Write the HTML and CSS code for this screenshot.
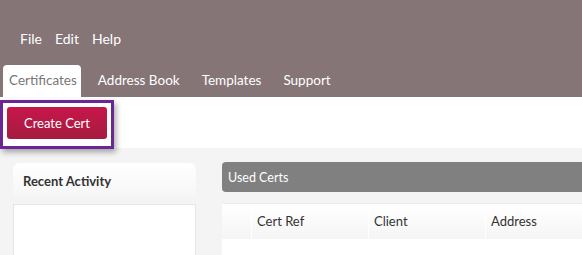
FILE: index.html
```html
<!DOCTYPE html>
<html lang="en">
<head>
    <meta charset="UTF-8">
    <meta name="viewport" content="width=device-width, initial-scale=1.0">
    <title>Certificates</title>
    <link rel="stylesheet" href="styles.css">
</head>
<body>
    <div class="topbar">
        <div class="menu">
            <span>File</span>
            <span>Edit</span>
            <span>Help</span>
        </div>
        <div class="tabs">
            <div class="tab active">Certificates</div>
            <div class="tab">Address Book</div>
            <div class="tab">Templates</div>
            <div class="tab">Support</div>
        </div>
    </div>

    <!-- Toolbar -->
    <div class="toolbar">
        <div class="focusBox">
            <button class="createBtn">Create Cert</button>
        </div>
    </div>

    <div class="main">
        <div class="sidebar">
            <div class="cardHead">Recent Activity</div>
            <div class="cardBody"></div>
        </div>
        <div class="content">
            <div class="panelTitle">Used Certs</div>
            <div class="grid">
                <div class="gridHead">
                    <div class="col colBlank"></div>
                    <div class="col">Cert Ref</div>
                    <div class="col">Client</div>
                    <div class="col">Address</div>
                </div>
                <div class="gridBody"></div>
            </div>
        </div>
    </div>
</body>
</html>
```

FILE: styles.css
```css
body {
    margin: 0;
    font-family: Lato, "Open Sans", sans-serif;
    font-size: 13px;
    background-color: #f4f4f4;
    overflow: hidden;
}
.topbar {
    background-color: #857577;
    height: 97px;
    display: flex;
    flex-direction: column;
    justify-content: flex-end;
}
.menu {
    display: flex;
    gap: 13px;
    padding-left: 20px;
    color: #fff;
    font-size: 14px;
    margin-bottom: 18px;
}
.tabs {
    display: flex;
    padding-left: 3px;
}
.tab {
    color: #fff;
    padding: 7px 9px 9px 9px;
    margin-right: 4px;
    font-size: 13.5px;
}
.tab.active {
    background-color: #fff;
    color: #777;
    border-radius: 4px 4px 0 0;
    padding: 7px 4px 9px 6px;
    margin-right: 8px;
}
.toolbar {
    background-color: #fff;
    height: 51px;
    position: relative;
}
.focusBox {
    position: absolute;
    left: 0;
    top: 3px;
    width: 108px;
    height: 43px;
    border: 3px solid #6b2594;
    box-shadow: 2px 3px 6px rgba(0, 0, 0, 0.35);
    background-color: #fff;
}
.createBtn {
    margin: 4px 0 0 4px;
    width: 100px;
    height: 32px;
    border: none;
    border-radius: 3px;
    background: linear-gradient(#c7164a, #a51c40);
    color: #fff;
    font-family: inherit;
    font-size: 13px;
}
.main {
    display: flex;
    gap: 26px;
    padding: 15px 0 0 13px;
}
.sidebar {
    width: 183px;
    flex-shrink: 0;
}
.cardHead {
    height: 34px;
    line-height: 37px;
    padding-left: 10px;
    font-weight: bold;
    color: #333;
    border-radius: 6px 6px 0 0;
    background: linear-gradient(#fff, #f6f6f6);
}
.cardBody {
    margin-top: 7px;
    height: 52px;
    background-color: #fff;
    border: 1px solid #e6e6e6;
    border-bottom: none;
}
.content {
    flex: 1;
}
.panelTitle {
    background-color: #808080;
    color: #fff;
    height: 30px;
    line-height: 31px;
    padding-left: 6px;
    font-size: 12.5px;
    border-radius: 4px 0 0 4px;
    margin-top: -1px;
}
.grid {
    margin-top: 11px;
    background-color: #fff;
}
.gridHead {
    display: flex;
    height: 35px;
    border-top: 1px solid #ececec;
    background: linear-gradient(#fff, #f5f5f5);
}
.col {
    width: 111px;
    padding-left: 5px;
    line-height: 35px;
    color: #333;
    border-left: 1px solid #fff;
}
.colBlank {
    width: 29px;
    padding: 0;
    border-left: none;
}
.gridBody {
    height: 18px;
    background-color: #fff;
}
```
